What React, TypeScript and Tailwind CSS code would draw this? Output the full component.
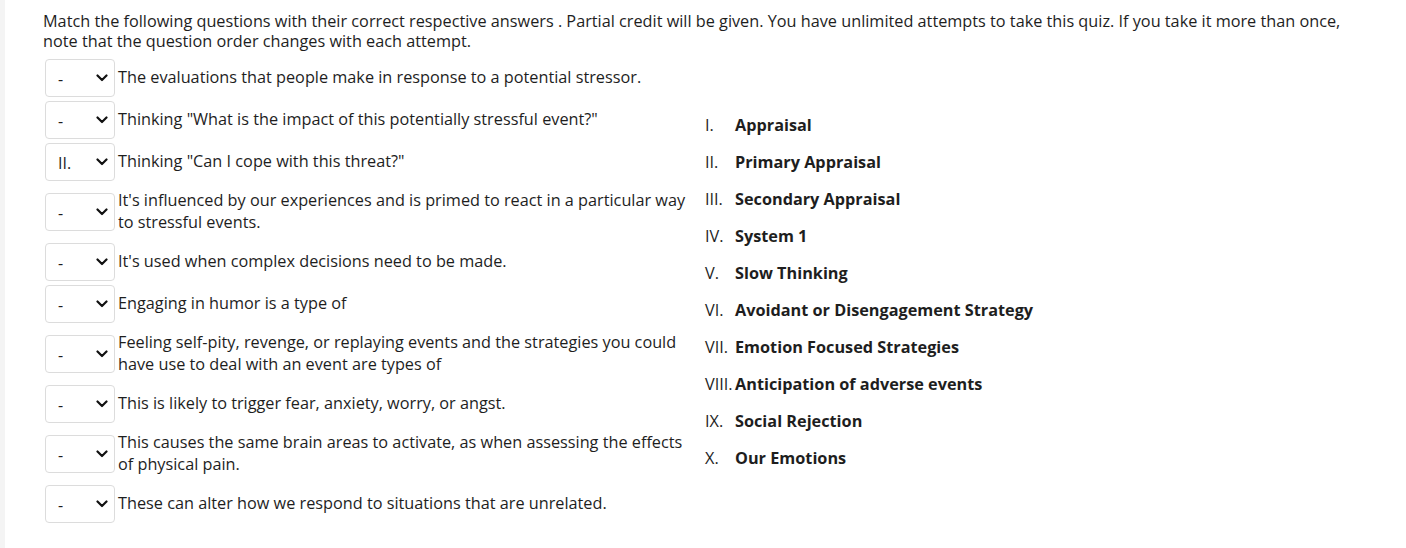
import React from "react";

const rows: { sel: string; text: string; two?: boolean }[] = [
  { sel: "-", text: "The evaluations that people make in response to a potential stressor." },
  { sel: "-", text: 'Thinking "What is the impact of this potentially stressful event?"' },
  { sel: "II.", text: 'Thinking "Can I cope with this threat?"' },
  { sel: "-", text: "It's influenced by our experiences and is primed to react in a particular way to stressful events.", two: true },
  { sel: "-", text: "It's used when complex decisions need to be made." },
  { sel: "-", text: "Engaging in humor is a type of" },
  { sel: "-", text: "Feeling self-pity, revenge, or replaying events and the strategies you could have use to deal with an event are types of", two: true },
  { sel: "-", text: "This is likely to trigger fear, anxiety, worry, or angst." },
  { sel: "-", text: "This causes the same brain areas to activate, as when assessing the effects of physical pain.", two: true },
  { sel: "-", text: "These can alter how we respond to situations that are unrelated." },
];

const answers: [string, string][] = [
  ["I.", "Appraisal"],
  ["II.", "Primary Appraisal"],
  ["III.", "Secondary Appraisal"],
  ["IV.", "System 1"],
  ["V.", "Slow Thinking"],
  ["VI.", "Avoidant or Disengagement Strategy"],
  ["VII.", "Emotion Focused Strategies"],
  ["VIII.", "Anticipation of adverse events"],
  ["IX.", "Social Rejection"],
  ["X.", "Our Emotions"],
];

function FakeSelect({ value }: { value: string }) {
  return (
    <div className="flex h-[38px] w-[70px] items-center justify-between rounded-[4px] border border-[#dcdcdc] bg-white pl-[12px] pr-[6px]">
      <span className="pt-[2px] text-[16px] leading-[20px]">{value}</span>
      <svg width="12" height="8" viewBox="0 0 12 8" fill="none">
        <path d="M1.5 1.5 L6 6 L10.5 1.5" stroke="#111" strokeWidth="2.2" strokeLinecap="round" strokeLinejoin="round" />
      </svg>
    </div>
  );
}

export default function App() {
  return (
    <div className="min-h-screen border-l-[5px] border-[#f4f4f4] bg-white font-['Open_Sans',sans-serif] text-[16.25px] text-[#1e1e1e]">
      <div className="pl-[38px] pt-[11px]">
        <p className="w-[1320px] leading-[20px]">
          Match the following questions with their correct respective answers . Partial credit will be given. You have unlimited attempts to take this quiz. If you take it more than once, note that the question order changes with each attempt.
        </p>
        <div className="mt-[6px] flex">
          <div className="flex flex-col">
            {rows.map((r, i) => (
              <div key={i} className="flex min-h-[42px] items-center">
                <div className="pl-[2px]">
                  <FakeSelect value={r.sel} />
                </div>
                <div className="ml-[3px] w-[575px] pb-[8px] pt-[6px] leading-[22px]">{r.text}</div>
              </div>
            ))}
          </div>
          <div className="flex flex-col justify-center pl-[12px]">
            {answers.map(([n, a]) => (
              <div key={n} className="flex h-[37px] items-center leading-[22px]">
                <span className="w-[30px]">{n}</span>
                <span className="font-bold">{a}</span>
              </div>
            ))}
          </div>
        </div>
      </div>
    </div>
  );
}
